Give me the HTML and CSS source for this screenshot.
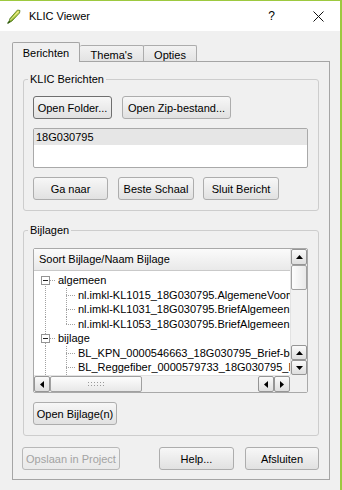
FILE: index.html
```html
<!DOCTYPE html>
<html>
<head>
<meta charset="utf-8">
<title>KLIC Viewer</title>
<link rel="stylesheet" href="styles.css">
</head>
<body>
<div class="window">
  <div class="titlebar">
    <svg class="appicon" width="14" height="15" viewBox="0 0 14 15">
      <defs>
        <linearGradient id="lg" x1="0" y1="1" x2="1" y2="0">
          <stop offset="0" stop-color="#5d8e1c"/>
          <stop offset="0.5" stop-color="#a9c93a"/>
          <stop offset="1" stop-color="#e8e36a"/>
        </linearGradient>
      </defs>
      <path d="M1.5 14 L3 9.5 L10.5 1 L13 1.5 L12.5 4 L5 12 Z" fill="url(#lg)" stroke="#4f7a18" stroke-width="0.8"/>
      <path d="M3 11.5 L11.5 2.5" stroke="#f5f2a0" stroke-width="1"/>
      <path d="M0.5 14.5 L3 12" stroke="#2f5a10" stroke-width="1.2"/>
    </svg>
    <span class="title">KLIC Viewer</span>
    <span class="help">?</span>
    <svg class="close" width="11" height="11" viewBox="0 0 11 11"><path d="M0.5 0.5L10.5 10.5M10.5 0.5L0.5 10.5" stroke="#111" stroke-width="1"/></svg>
  </div>

  <div class="content">
    <div class="tabbar">
      <div class="tab active">Berichten</div>
      <div class="tab t2">Thema's</div>
      <div class="tab t3">Opties</div>
    </div>

    <div class="pane">
      <fieldset class="group g1">
        <legend>KLIC Berichten</legend>
        <div class="btnrow gap10">
          <button class="btn focus w79">Open Folder...</button>
          <button class="btn w109">Open Zip-bestand...</button>
        </div>
        <div class="listbox">
          <div class="item sel">18G030795</div>
        </div>
        <div class="btnrow gap10">
          <button class="btn w75">Ga naar</button>
          <button class="btn w76">Beste Schaal</button>
          <button class="btn w76 ml-1">Sluit Bericht</button>
        </div>
      </fieldset>

      <fieldset class="group g2">
        <legend>Bijlagen</legend>
        <div class="tree">
          <div class="tree-main">
            <div class="tree-header">Soort Bijlage/Naam Bijlage</div>
            <div class="tree-body">
              <div class="row"><span class="g exp first"><span class="box"></span></span><span class="txt">algemeen</span></div>
              <div class="row"><span class="g pipe"></span><span class="g tee"></span><span class="txt">nl.imkl-KL1015_18G030795.AlgemeneVoorwaarden.pdf</span></div>
              <div class="row"><span class="g pipe"></span><span class="g tee"></span><span class="txt">nl.imkl-KL1031_18G030795.BriefAlgemeen.pdf</span></div>
              <div class="row"><span class="g pipe"></span><span class="g ell"></span><span class="txt">nl.imkl-KL1053_18G030795.BriefAlgemeen.pdf</span></div>
              <div class="row"><span class="g exp mid"><span class="box"></span></span><span class="txt">bijlage</span></div>
              <div class="row"><span class="g pipe"></span><span class="g tee"></span><span class="txt">BL_KPN_0000546663_18G030795_Brief-beheerder.pdf</span></div>
              <div class="row"><span class="g pipe"></span><span class="g tee"></span><span class="txt">BL_Reggefiber_0000579733_18G030795_Brief.pdf</span></div>
            </div>
          </div>
          <div class="vscroll">
            <div class="sbtn v"><svg width="7" height="4" viewBox="0 0 7 4"><path d="M3.5 0L7 4H0z"/></svg></div>
            <div class="thumb-v"></div>
            <div class="track"></div>
            <div class="sbtn v"><svg width="7" height="4" viewBox="0 0 7 4"><path d="M3.5 0L7 4H0z"/></svg></div>
            <div class="sbtn v"><svg width="7" height="4" viewBox="0 0 7 4"><path d="M0 0H7L3.5 4z"/></svg></div>
          </div>
          <div class="hscroll">
            <div class="sbtn h"><svg width="4" height="7" viewBox="0 0 4 7"><path d="M0 3.5L4 0V7z"/></svg></div>
            <div class="thumb-h"><span class="grip"></span></div>
            <div class="track"></div>
            <div class="sbtn h"><svg width="4" height="7" viewBox="0 0 4 7"><path d="M0 3.5L4 0V7z"/></svg></div>
            <div class="sbtn h"><svg width="4" height="7" viewBox="0 0 4 7"><path d="M4 3.5L0 0V7z"/></svg></div>
          </div>
          <div class="corner"></div>
        </div>
        <div class="btnrow">
          <button class="btn w84">Open Bijlage(n)</button>
        </div>
      </fieldset>

      <div class="footer">
        <button class="btn disabled w98 ml-1">Opslaan in Project</button>
        <div class="footer-right">
          <button class="btn w75">Help...</button>
          <button class="btn w74">Afsluiten</button>
        </div>
      </div>
    </div>
  </div>
</div>
</body>
</html>
```

FILE: styles.css
```css
* { box-sizing: border-box; }

html, body {
  margin: 0;
  padding: 0;
}

body {
  width: 342px;
  height: 490px;
  overflow: hidden;
  background: #f0f0f0;
  font-family: "Liberation Sans", Arial, sans-serif;
  font-size: 11px;
  color: #000;
}

.window {
  width: 342px;
  height: 490px;
  display: flex;
  flex-direction: column;
  background: #f0f0f0;
  border-top: 1px solid #9dc93f;
  border-right: 2px solid #9dc93f;
}

/* Title bar */
.titlebar {
  height: 30px;
  flex: none;
  background: #fff;
  display: flex;
  align-items: center;
  padding-left: 7px;
  font-size: 11px;
}

.appicon {
  margin-right: 8px;
  margin-top: 1px;
}

.title {
  color: #000;
}

.help {
  margin-left: auto;
  margin-right: 38px;
  font-size: 12px;
}

.close {
  margin-right: 16px;
}

/* Content */
.content {
  flex: 1;
  padding: 11px 10px 0 12px;
}

.tabbar {
  height: 19px;
  display: flex;
  align-items: flex-end;
}

.tab {
  height: 16px;
  border: 1px solid #acacac;
  border-bottom: none;
  background: linear-gradient(#f2f2f2, #e3e3e3);
  display: flex;
  align-items: center;
  justify-content: center;
  padding-top: 2px;
  border-radius: 2px 2px 0 0;
}

.tab.active {
  height: 20px;
  width: 68px;
  margin-bottom: -1px;
  background: #f0f0f0;
  border-color: #a5a5a5;
  position: relative;
  z-index: 2;
  padding-top: 1px;
}

.tab.t2 { width: 64px; border-left: none; }
.tab.t3 { width: 54px; margin-left: -1px; }

.pane {
  height: 419px;
  border: 1px solid #a5a5a5;
  background: #f0f0f0;
  padding: 10px 10px 9px 10px;
  display: flex;
  flex-direction: column;
}

/* Group boxes */
.group {
  margin: 0;
  min-width: 0;
  border: 1px solid #cdcdcd;
  border-radius: 3px;
  padding: 10px 10px 10px 9px;
}

.group legend {
  line-height: 14px;
  padding: 0 2px;
  margin-left: -5px;
}

.g2 {
  margin-top: 12px;
  padding-top: 11px;
}

.btnrow {
  display: flex;
}

.gap10 { gap: 10px; }

.btn {
  height: 23px;
  padding: 0;
  font-family: inherit;
  font-size: 11px;
  color: #000;
  background: linear-gradient(#f7f7f7, #e1e1e1);
  border: 1px solid #adadad;
  border-radius: 3px;
  display: inline-flex;
  align-items: center;
  justify-content: center;
  white-space: nowrap;
}

.btn.focus { border-color: #6f6f6f; }

.btn.disabled {
  color: #a3a3a3;
  border-color: #b8b8b8;
  background: linear-gradient(#f3f3f3, #e9e9e9);
}

.w74 { width: 74px; }
.w75 { width: 75px; }
.w76 { width: 76px; }
.w79 { width: 79px; }
.w84 { width: 84px; }
.w98 { width: 98px; }
.w109 { width: 109px; }
.ml-1 { margin-left: -1px; }

/* List */
.listbox {
  margin: 9px 0;
  height: 40px;
  border: 1px solid #a9a9a9;
  border-radius: 2px;
  background: #fff;
}

.item {
  height: 16px;
  line-height: 16px;
  padding-left: 2px;
}

.item.sel { background: #e6e6e6; }

/* Tree */
.tree {
  height: 145px;
  margin-bottom: 9px;
  border: 1px solid #a9a9a9;
  border-radius: 2px;
  background: #fff;
  display: grid;
  grid-template-columns: 256px 17px;
  grid-template-rows: 126px 17px;
}

.tree-main {
  overflow: hidden;
  display: flex;
  flex-direction: column;
}

.tree-header {
  height: 22px;
  flex: none;
  padding-left: 5px;
  line-height: 21px;
  background: linear-gradient(#fbfbfb, #e9e9e9);
  border-bottom: 1px solid #c9c9c9;
  white-space: nowrap;
}

.tree-body {
  padding: 2px 0 0 2px;
}

.row {
  height: 14.5px;
  line-height: 14.5px;
  display: flex;
  white-space: nowrap;
}

.txt {
  padding-left: 2px;
}

.g {
  flex: none;
  width: 20px;
  height: 100%;
  background-repeat: no-repeat;
}

.pipe {
  background-image: repeating-linear-gradient(to bottom, #a2a2a2 0 1px, transparent 1px 2px);
  background-size: 1px 100%;
  background-position: 9px 0;
}

.tee, .ell {
  background-image:
    repeating-linear-gradient(to bottom, #a2a2a2 0 1px, transparent 1px 2px),
    repeating-linear-gradient(to right, #a2a2a2 0 1px, transparent 1px 2px);
  background-position: 10px 0, 10px 7px;
  background-size: 1px 100%, 9px 1px;
}

.ell {
  background-size: 1px 8px, 9px 1px;
}

.exp {
  display: flex;
  align-items: center;
  padding-left: 5px;
  background-image:
    repeating-linear-gradient(to bottom, #a2a2a2 0 1px, transparent 1px 2px),
    repeating-linear-gradient(to right, #a2a2a2 0 1px, transparent 1px 2px);
  background-size: 1px 100%, 6px 1px;
  background-position: 9px 0, 14px 7px;
}

.exp.first {
  background-size: 1px 50%, 6px 1px;
  background-position: 9px 100%, 14px 7px;
}

.box {
  width: 9px;
  height: 9px;
  border: 1px solid #939393;
  background: linear-gradient(#222, #222) no-repeat center / 5px 1px, #fff;
}

/* Scrollbars */
.vscroll {
  display: flex;
  flex-direction: column;
  background: #f1f1f1;
  border-left: 1px solid #e2e2e2;
}

.hscroll {
  display: flex;
  background: #f1f1f1;
  border-top: 1px solid #e2e2e2;
}

.corner {
  background: #f0f0f0;
}

.track { flex: 1; }

.sbtn {
  flex: none;
  display: flex;
  align-items: center;
  justify-content: center;
  border: 1px solid #959595;
  border-radius: 2px;
  background: linear-gradient(#fafafa, #dedede);
}

.sbtn svg { fill: #000; }

.sbtn.v { height: 16px; }
.sbtn.h { width: 16px; }
.vscroll .sbtn:last-child { height: 15px; }
.vscroll .sbtn:nth-child(4) { height: 15px; }

.thumb-v {
  height: 25px;
  flex: none;
  border: 1px solid #a0a0a0;
  border-radius: 2px;
  background: linear-gradient(90deg, #fdfdfd, #e8e8e8);
}

.thumb-h {
  width: 92px;
  flex: none;
  border: 1px solid #a0a0a0;
  border-radius: 2px;
  background: linear-gradient(#fdfdfd, #e8e8e8);
  display: flex;
  align-items: center;
  justify-content: center;
}

.grip {
  width: 18px;
  height: 7px;
  background: radial-gradient(circle, #9a9a9a 0.7px, transparent 0.9px) 0 0 / 3px 3px;
}

/* Footer */
.footer {
  margin-top: auto;
  display: flex;
  justify-content: space-between;
}

.footer-right {
  display: flex;
  gap: 11px;
}
```
